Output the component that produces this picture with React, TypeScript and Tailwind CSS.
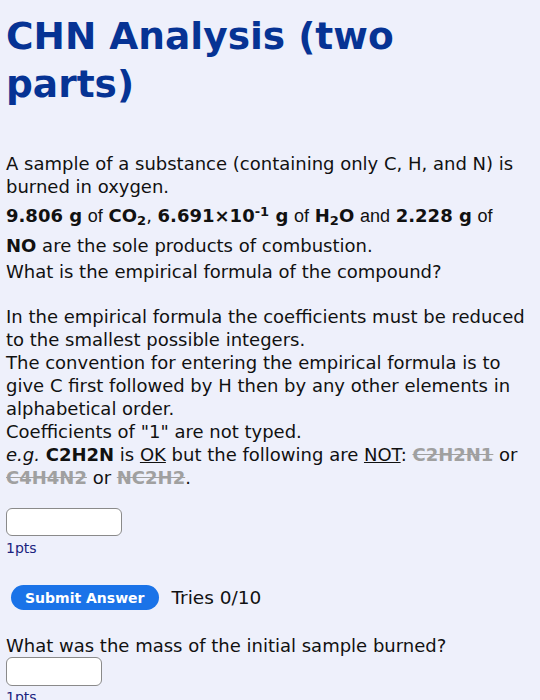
import React from 'react';

const verdana = { fontFamily: '"DejaVu Sans", Verdana, sans-serif' };

function Struck({ children }: { children: React.ReactNode }) {
  return <span className="font-bold text-[#a0a0a0] line-through">{children}</span>;
}

function Arial({ children }: { children: React.ReactNode }) {
  return <span className="font-['Liberation_Sans',Arial,sans-serif] text-[18px]">{children}</span>;
}

export default function App() {
  return (
    <div className="min-h-[700px] bg-[#eef0fb] px-[6px] text-[#111] overflow-hidden" style={verdana}>
      <h1 className="pt-[12px] text-[37.5px] leading-[48px] font-bold text-[#063394]">
        CHN Analysis (two
        <br />
        parts)
      </h1>

      <div className="mt-[44px] text-[18px] leading-[23px]">
        <p>
          A sample of a substance (containing only C, H, and N) is burned in oxygen.
        </p>
        <p className="leading-[29px] mt-[3px]">
          <b>9.806 g</b> <Arial>of</Arial>{' '}
          <b>
            CO<sub className="text-[13px] leading-none">2</sub>
          </b>
          , <b>6.691×10<sup className="text-[13px] leading-none">-1</sup> g</b> <Arial>of</Arial>{' '}
          <b>
            H<sub className="text-[13px] leading-none">2</sub>O
          </b>{' '}
          <Arial>and</Arial> <b>2.228 g</b> <Arial>of</Arial>
          <br />
          <b>NO</b> are the sole products of combustion.
        </p>
        <p>What is the empirical formula of the compound?</p>

        <div className="mt-[22px]">
          <p>In the empirical formula the coefficients must be reduced to the smallest possible integers.</p>
          <p>
            The convention for entering the empirical formula is to give C first followed by H then by any other
            elements in alphabetical order.
          </p>
          <p>Coefficients of "1" are not typed.</p>
          <p>
            <i>e.g.</i> <b>C2H2N</b> is <u>OK</u> but the following are <u>NOT</u>: <Struck>C2H2N1</Struck> or{' '}
            <Struck>C4H4N2</Struck> or <Struck>NC2H2</Struck>.
          </p>
        </div>

        <div className="mt-[19px]">
          <div className="w-[116px] h-[28px] rounded-[6px] border border-[#8a8a8a] bg-white" />
          <div className="mt-[3px] text-[14px] leading-[18px] text-[#1a237e]">1pts</div>
        </div>

        <div className="mt-[28px] flex items-center gap-[13px]">
          <button className="ml-[5px] h-[25px] px-[14px] rounded-full bg-[#1a73e8] text-white text-[14px] font-bold leading-none">
            Submit Answer
          </button>
          <span className="text-[18.5px]">Tries 0/10</span>
        </div>

        <p className="mt-[24px]">What was the mass of the initial sample burned?</p>
        <div className="w-[96px] h-[29px] rounded-[6px] border border-[#8a8a8a] bg-white" />
        <div className="mt-[2px] text-[14px] leading-[18px] text-[#1a237e]">1pts</div>
      </div>
    </div>
  );
}
